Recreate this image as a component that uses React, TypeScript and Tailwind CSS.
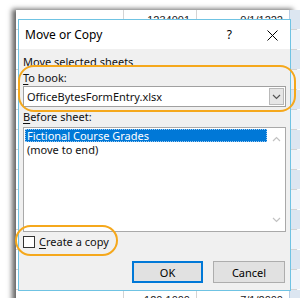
import React from 'react';

const font = { fontFamily: '"Noto Sans", "Open Sans", sans-serif' };

// a spreadsheet row behind the dialog
function SheetRow({ a, b, c, band }: { a?: string; b?: string; c?: string; band: boolean }) {
  return (
    <div className="flex h-[20px] border-b border-[#d4d4d4] text-[11px] text-[#222]">
      <div className="w-[108px] shrink-0 border-r border-[#d4d4d4] pl-[3px] pt-[2px]">{a}</div>
      <div className="w-[73px] shrink-0 border-r border-[#d4d4d4] pr-[6px] pt-[2px] text-right">{b}</div>
      <div className="w-[93px] shrink-0 border-r border-[#b8cce4] pr-[6px] pt-[2px] text-right">{c}</div>
      <div className={`w-[10px] shrink-0 ${band ? 'bg-[#dce6f1]' : 'bg-[#eef3f9]'}`} />
    </div>
  );
}

export default function App() {
  const rows = Array.from({ length: 15 }, (_, i) => i);

  return (
    <div className="relative w-[300px] h-[298px] overflow-hidden bg-white pl-[16px] pt-[10px]" style={font}>
      {/* screenshot with its drop shadow */}
      <div className="relative w-[281px] h-[300px] bg-white shadow-[-4px_-1px_5px_rgba(0,0,0,0.6)]">
        <div style={{ fontFamily: '"Liberation Sans", Arial, sans-serif' }}>
          {rows.map((i) => (
            <SheetRow
              key={i}
              band={i % 2 === 0}
              a={i === 14 ? 'ge' : undefined}
              b={i === 0 ? '1234001' : i === 14 ? '120.1000' : undefined}
              c={i === 0 ? '0/1/1222' : i === 14 ? '7/1/2000' : undefined}
            />
          ))}
        </div>

        {/* Move or Copy dialog */}
        <div className="absolute left-[2px] top-[9px] w-[273px] h-[272px] flex flex-col border border-[#6fc3e3] bg-[#f0f0f0]">
          <div className="h-[29px] shrink-0 bg-white flex items-center pl-[6px] pr-[12px]">
            <span className="text-[12px] text-black leading-none">Move or Copy</span>
            <span className="ml-auto mr-[35px] text-[12px] text-black leading-none">?</span>
            <svg width="11" height="11" viewBox="0 0 11 11" className="mt-[1px]">
              <path d="M0.5 0.5 L10.5 10.5 M10.5 0.5 L0.5 10.5" stroke="#000" strokeWidth="1" />
            </svg>
          </div>

          <div className="flex flex-col px-[4px] pt-[6px] text-[11px] text-[#111]">
            <div className="h-[14px] leading-[14px]">Move selected sheets</div>
            <div className="mt-[2px] h-[14px] leading-[14px]">
              <span className="underline underline-offset-2">T</span>o book:
            </div>
            <div className="mt-[1px] h-[21px] flex border border-[#a0a0a0] bg-white">
              <div className="flex-1 pl-[3px] leading-[19px]">OfficeBytesFormEntry.xlsx</div>
              <div className="m-px w-[15px] flex items-center justify-center border border-[#b9b9b9] bg-[#e6e6e6]">
                <svg width="9" height="6" viewBox="0 0 9 6">
                  <path d="M1 1 L4.5 4.5 L8 1" fill="none" stroke="#555" strokeWidth="1.2" />
                </svg>
              </div>
            </div>
            <div className="mt-[3px] h-[14px] leading-[14px]">
              <span className="underline underline-offset-2">B</span>efore sheet:
            </div>
            <div className="mt-[3px] h-[105px] flex border border-[#a9a9a9] bg-white">
              <div className="flex-1 p-px">
                <div className="h-[13px] leading-[13px] pl-[2px] bg-[#0078d7] text-white outline outline-1 outline-dotted outline-offset-[-1px] outline-[#9cc8f0]">
                  Fictional Course Grades
                </div>
                <div className="mt-px h-[14px] leading-[14px] pl-[2px]">(move to end)</div>
              </div>
              <div className="w-[17px] flex flex-col items-center justify-between py-[8px]">
                <svg width="9" height="6" viewBox="0 0 9 6">
                  <path d="M1 5 L4.5 1.5 L8 5" fill="none" stroke="#c2c2c2" strokeWidth="1.2" />
                </svg>
                <svg width="9" height="6" viewBox="0 0 9 6">
                  <path d="M1 1 L4.5 4.5 L8 1" fill="none" stroke="#c2c2c2" strokeWidth="1.2" />
                </svg>
              </div>
            </div>
            <div className="mt-[3px] h-[14px] flex items-center">
              <div className="w-[12px] h-[12px] border border-[#333] bg-white" />
              <span className="ml-[4px] leading-[14px]">
                <span className="underline underline-offset-2">C</span>reate a copy
              </span>
            </div>
            <div className="mt-[12px] flex justify-end gap-[10px] pr-px">
              <button className="w-[71px] h-[22px] border-2 border-[#0078d7] bg-[#e1e1e1] text-[11px] text-black leading-none">
                OK
              </button>
              <button className="w-[72px] h-[22px] border border-[#adadad] bg-[#e1e1e1] text-[11px] text-black leading-none">
                Cancel
              </button>
            </div>
          </div>
        </div>
      </div>

      {/* orange highlight rings */}
      <div className="absolute left-[18px] top-[65px] w-[278px] h-[47px] rounded-[16px] border-[2.5px] border-[#f5a81c]" />
      <div className="absolute left-[15px] top-[225px] w-[103px] h-[31px] rounded-[16px] border-[2.5px] border-[#f5a81c]" />
    </div>
  );
}
